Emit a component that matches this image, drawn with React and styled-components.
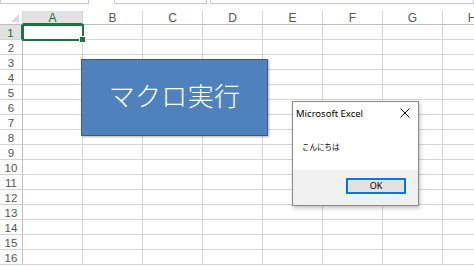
import React from "react";
import styled, { createGlobalStyle } from "styled-components";

const Global = createGlobalStyle`
  html, body { margin: 0; padding: 0; background: #fff; overflow: hidden; }
  body { font-family: "Liberation Sans", Arial, sans-serif; }
`;

const Page = styled.div`
  width: 474px;
  height: 266px;
  position: relative;
  overflow: hidden;
  background: #fff;
`;

const TopStrip = styled.div`
  height: 11px;
  display: flex;
  align-items: flex-start;
  gap: 3px;
  background: #fff;
`;

const TopBox = styled.div`
  width: ${(p) => p.$w}px;
  margin-left: ${(p) => p.$ml || 0}px;
  flex: ${(p) => (p.$grow ? 1 : "none")};
  height: 3px;
  border: 1px solid #c6c6c6;
  border-top: none;
  background: #fff;
  position: relative;
`;

const Sheet = styled.div`
  position: relative;
  display: grid;
  grid-template-columns: 23px repeat(7, 60px) 59px;
  grid-template-rows: 14px repeat(16, 15px);
`;

const Corner = styled.div`
  border-right: 1px solid #d4d4d4;
  border-bottom: 1px solid #bfbfbf;
  position: relative;
  &::after {
    content: "";
    position: absolute;
    right: 3px;
    bottom: 2px;
    border-style: solid;
    border-width: 0 0 8px 8px;
    border-color: transparent transparent #dadada transparent;
  }
`;

const ColHead = styled.div`
  display: flex;
  align-items: center;
  justify-content: center;
  font-size: 12px;
  color: ${(p) => (p.$active ? "#1e6b3f" : "#555")};
  background: ${(p) => (p.$active ? "#e1e1e1" : "#fff")};
  border-right: 1px solid #d4d4d4;
  border-bottom: ${(p) => (p.$active ? "2px solid #217346" : "1px solid #bfbfbf")};
  box-sizing: border-box;
  padding-top: 1px;
`;

const RowHead = styled.div`
  display: flex;
  align-items: center;
  justify-content: center;
  font-size: 11.5px;
  color: ${(p) => (p.$active ? "#1e6b3f" : "#555")};
  background: ${(p) => (p.$active ? "#e1e1e1" : "#fff")};
  border-right: ${(p) => (p.$active ? "2px solid #217346" : "1px solid #bfbfbf")};
  border-bottom: 1px solid #d4d4d4;
  box-sizing: border-box;
  padding-top: 1px;
`;

const Cell = styled.div`
  border-right: 1px solid #d4d4d4;
  border-bottom: 1px solid #d4d4d4;
  box-sizing: border-box;
`;

const Selection = styled.div`
  position: absolute;
  left: 22px;
  top: 13px;
  width: 62px;
  height: 17px;
  border: 2px solid #217346;
  box-sizing: border-box;
  &::after {
    content: "";
    position: absolute;
    right: -4px;
    bottom: -4px;
    width: 5px;
    height: 5px;
    background: #217346;
    border: 1px solid #fff;
  }
`;

const MacroButton = styled.div`
  position: absolute;
  left: 81px;
  top: 48px;
  width: 187px;
  height: 77px;
  box-sizing: border-box;
  background: #4f81bd;
  border: 1.5px solid #385d8a;
  box-shadow: 1px 1px 2px rgba(0, 0, 0, 0.3);
  display: flex;
  align-items: center;
  justify-content: center;
  color: #fff;
  font-family: "Noto Sans CJK JP", "Noto Sans", sans-serif;
  font-size: 26px;
  font-weight: 300;
  letter-spacing: 0.3px;
  padding-bottom: 7px;
`;

const Dialog = styled.div`
  position: absolute;
  left: 292px;
  top: 90px;
  width: 127px;
  height: 105px;
  box-sizing: border-box;
  border: 1px solid #8a8a8a;
  background: #fff;
  box-shadow: 1px 2px 4px rgba(0, 0, 0, 0.25);
  display: flex;
  flex-direction: column;
  font-family: "Noto Sans", "Noto Sans CJK JP", sans-serif;
`;

const TitleBar = styled.div`
  height: 22px;
  display: flex;
  align-items: center;
  justify-content: space-between;
  padding: 0 8px 0 3px;
  font-size: 9.5px;
  color: #000;
`;

const Body = styled.div`
  flex: 1;
  padding: 17px 0 0 9px;
  font-family: "Noto Sans CJK JP", sans-serif;
  font-size: 7.5px;
  color: #000;
`;

const Footer = styled.div`
  height: 35px;
  background: #f0f0f0;
  display: flex;
  align-items: center;
  justify-content: flex-end;
  padding-right: 12px;
`;

const OkButton = styled.div`
  width: 60px;
  height: 16px;
  box-sizing: border-box;
  border: 2px solid #0078d7;
  background: #e1e1e1;
  display: flex;
  align-items: center;
  justify-content: center;
  font-size: 9px;
  color: #000;
  margin-top: -4px;
`;

const cols = ["A", "B", "C", "D", "E", "F", "G", "H"];
const rows = Array.from({ length: 16 }, (_, i) => i + 1);

export default function App() {
  return (
    <Page>
      <Global />
      <TopStrip>
        <TopBox $w={87} />
        <TopBox $w={91} $ml={22} />
        <TopBox $grow />
      </TopStrip>
      <Sheet>
        <Corner />
        {cols.map((c) => (
          <ColHead key={c} $active={c === "A"}>
            {c}
          </ColHead>
        ))}
        {rows.map((r) => (
          <React.Fragment key={r}>
            <RowHead $active={r === 1}>{r}</RowHead>
            {cols.map((c) => (
              <Cell key={c} />
            ))}
          </React.Fragment>
        ))}
        <Selection />
        <MacroButton>マクロ実行</MacroButton>
        <Dialog>
          <TitleBar>
            <span>Microsoft Excel</span>
            <svg width="10" height="10" viewBox="0 0 10 10">
              <path d="M0.5 0.5 L9.5 9.5 M9.5 0.5 L0.5 9.5" stroke="#111" strokeWidth="1" fill="none" />
            </svg>
          </TitleBar>
          <Body>こんにちは</Body>
          <Footer>
            <OkButton>OK</OkButton>
          </Footer>
        </Dialog>
      </Sheet>
    </Page>
  );
}
